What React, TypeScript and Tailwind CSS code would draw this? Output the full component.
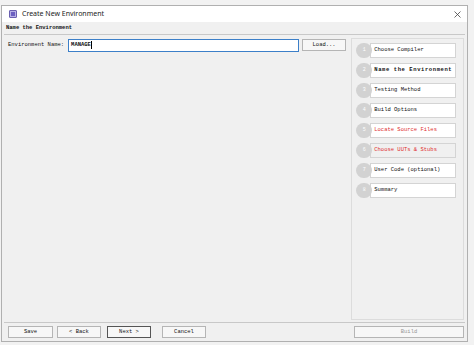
import React from "react";

const mono = { fontFamily: '"Liberation Mono", "DejaVu Sans Mono", monospace' };

function Step({ n, label, bold, red, gray }: { n: number; label: string; bold?: boolean; red?: boolean; gray?: boolean }) {
  return (
    <div className="flex items-center h-[15px]">
      <div className="w-[16px] h-[15px] rounded-full bg-[#d2d2d2] flex items-center justify-center text-white text-[5px] -mr-[2px] z-10" style={mono}>
        {n}
      </div>
      <div
        className={`w-[86px] h-[15px] border border-[#d4d4d4] flex items-center pl-[3px] text-[5.5px] ${gray ? "bg-[#f0f0f0]" : "bg-white"} ${red ? "text-[#e03030]" : "text-[#111]"} ${bold ? "font-bold tracking-[0.6px]" : ""}`}
        style={mono}
      >
        {label}
      </div>
    </div>
  );
}

function Btn({ label, w, def, disabled }: { label: string; w: string; def?: boolean; disabled?: boolean }) {
  return (
    <div
      className={`${w} h-[12px] flex items-center justify-center text-[5.5px] bg-[#f7f7f7] border ${def ? "border-[#555]" : "border-[#b5b5b5]"} ${disabled ? "text-[#999]" : "text-[#111]"}`}
      style={mono}
    >
      {label}
    </div>
  );
}

export default function App() {
  return (
    <div className="w-[474px] h-[345px] bg-[#f2f2f2] overflow-hidden pt-[5px]">
      <div className="ml-[1px] w-[467px] h-[337px] border border-[#b0b0b0] bg-[#f0f0f0] flex flex-col">
        {/* title bar */}
        <div className="h-[16px] bg-white flex items-center shrink-0">
          <div className="ml-[7px] w-[8px] h-[8px] rounded-[1px] border border-[#6a5fb0] bg-[#b7b0e6] flex items-center justify-center">
            <div className="w-[4px] h-[4px] bg-[#6a5fc0]" />
          </div>
          <div className="ml-[5px] text-[7px] text-[#222]" style={{ fontFamily: '"Noto Sans", "Liberation Sans", sans-serif' }}>
            Create New Environment
          </div>
          <svg className="ml-auto mr-[6px]" width="7" height="7" viewBox="0 0 7 7">
            <path d="M0.5 0.5 L6.5 6.5 M6.5 0.5 L0.5 6.5" stroke="#444" strokeWidth="0.8" fill="none" />
          </svg>
        </div>
        {/* header */}
        <div className="h-[12px] flex items-center pl-[4px] text-[5.5px] font-bold text-[#111] shrink-0" style={mono}>
          Name the Environment
        </div>
        <div className="h-[1px] bg-[#c8c8c8] mx-[2px] shrink-0" />
        {/* body */}
        <div className="flex flex-1 pt-[3px] pl-[1px] pr-[3px]">
          <div className="w-[347px] flex items-start">
            <div className="flex items-center h-[14px]">
              <div className="ml-[5px] text-[5.5px] text-[#111]" style={mono}>
                Environment Name:
              </div>
              <div className="ml-[4px] w-[231px] h-[13px] border border-[#3c7fc8] bg-white flex items-center pl-[2px] text-[5.5px] font-bold text-[#111]" style={mono}>
                MANAGE<span className="inline-block w-[1px] h-[8px] bg-black" />
              </div>
              <div className="ml-[3px] w-[44px] h-[12px] border border-[#b5b5b5] bg-[#f7f7f7] flex items-center justify-center text-[5.5px] text-[#111]" style={mono}>
                Load...
              </div>
            </div>
          </div>
          <div className="ml-[2px] w-[113px] h-[282px] border border-[#dcdcdc] flex flex-col pl-[4px] pt-[4px] gap-[5px]">
            <Step n={1} label="Choose Compiler" />
            <Step n={2} label="Name the Environment" bold />
            <Step n={3} label="Testing Method" />
            <Step n={4} label="Build Options" />
            <Step n={5} label="Locate Source Files" red />
            <Step n={6} label="Choose UUTs & Stubs" red gray />
            <Step n={7} label="User Code (optional)" />
            <Step n={8} label="Summary" />
          </div>
        </div>
        <div className="h-[1px] bg-[#c8c8c8] mx-[2px] shrink-0" />
        <div className="h-[18px] flex items-center pl-[6px] pr-[3px] shrink-0">
          <Btn label="Save" w="w-[45px]" />
          <div className="w-[4px]" />
          <Btn label="< Back" w="w-[44px]" />
          <div className="w-[6px]" />
          <Btn label="Next >" w="w-[44px]" def />
          <div className="w-[11px]" />
          <Btn label="Cancel" w="w-[44px]" />
          <div className="ml-auto">
            <Btn label="Build" w="w-[110px]" disabled />
          </div>
        </div>
      </div>
    </div>
  );
}
